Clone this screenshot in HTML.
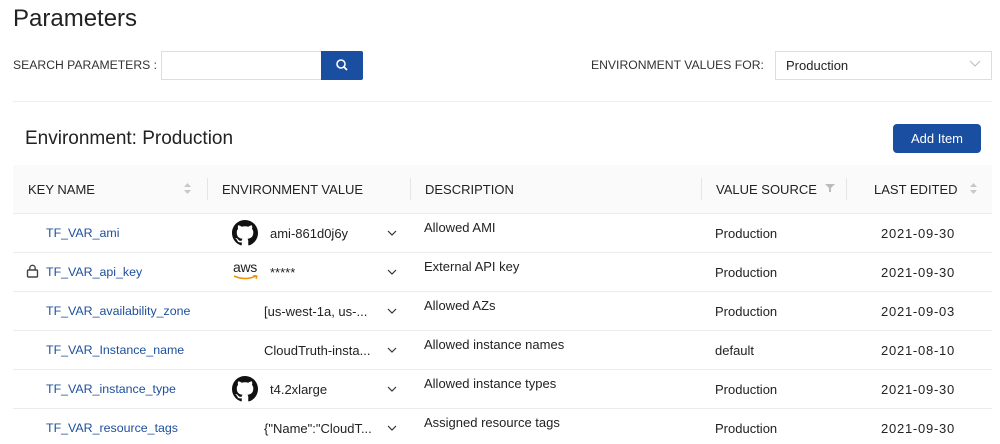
<!DOCTYPE html>
<html><head><style>
*{box-sizing:border-box;margin:0;padding:0}
body{width:1000px;height:444px;overflow:hidden;background:#fff;font-family:"Liberation Sans",sans-serif;color:#222;position:relative}
.a{position:absolute;white-space:nowrap}
.lbl{font-size:12.2px;color:#333}
.th{font-size:13px;color:#222;top:182px}
.sep{position:absolute;top:178px;width:1px;height:22px;background:#e5e5e5}
.row{position:absolute;left:13px;width:979px;height:39px;border-bottom:1px solid #ececec}
.k{font-size:12.4px;color:#1d4f9c;left:46px}
.v{font-size:13px;color:#222;left:264px}
.d{font-size:13px;color:#222;left:424px}
.s{font-size:13px;color:#222;left:715px}
.e{font-size:13px;color:#222;left:881px;letter-spacing:0.75px}
</style></head><body>
<div class="a" style="left:13px;top:5px;font-size:24px;color:#222">Parameters</div>
<div class="a lbl" style="left:13px;top:58px">SEARCH PARAMETERS :</div>
<div class="a" style="left:161px;top:51px;width:161px;height:29px;border:1px solid #ddd;border-right:none"></div>
<div class="a" style="left:321px;top:51px;width:42px;height:29px;background:#1a4ea0;border-radius:0 2px 2px 0">
<svg width="42" height="29"><circle cx="20" cy="13" r="4" stroke="#fff" stroke-width="1.6" fill="none"/><line x1="23" y1="16" x2="26" y2="19" stroke="#fff" stroke-width="1.8"/></svg></div>
<div class="a lbl" style="left:591px;top:58px">ENVIRONMENT VALUES FOR:</div>
<div class="a" style="left:775px;top:51px;width:217px;height:29px;border:1px solid #ddd"></div>
<div class="a" style="left:786px;top:58px;font-size:13px">Production</div>
<svg class="a" style="left:969px;top:60px" width="12" height="8"><path d="M1 1 L6 6 L11 1" stroke="#bbb" fill="none"/></svg>
<div class="a" style="left:13px;top:101px;width:979px;height:1px;background:#eee"></div>
<div class="a" style="left:25px;top:128px;font-size:19px;color:#222">Environment: Production</div>
<div class="a" style="left:893px;top:124px;width:88px;height:29px;background:#1a4ea0;border-radius:4px;color:#fff;font-size:13px;text-align:center;line-height:29px">Add Item</div>
<div class="a" style="left:13px;top:165px;width:979px;height:49px;background:#fafafa;border-bottom:1px solid #ececec"></div>
<div class="a th" style="left:28px">KEY NAME</div>
<svg class="a" style="left:184px;top:183px" width="7" height="11"><path d="M0 4L3.5 0L7 4Z M0 7L3.5 11L7 7Z" fill="#c8c8c8"/></svg>
<div class="sep" style="left:207px"></div>
<div class="a th" style="left:222px">ENVIRONMENT VALUE</div>
<div class="sep" style="left:410px"></div>
<div class="a th" style="left:425px">DESCRIPTION</div>
<div class="sep" style="left:701px"></div>
<div class="a th" style="left:716px">VALUE SOURCE</div>
<svg class="a" style="left:825px;top:184px" width="10" height="8"><path d="M0 0H10L6 4V8H4V4Z" fill="#bbb"/></svg>
<div class="sep" style="left:846px"></div>
<div class="a th" style="left:874px">LAST EDITED</div>
<svg class="a" style="left:970px;top:183px" width="7" height="11"><path d="M0 4L3.5 0L7 4Z M0 7L3.5 11L7 7Z" fill="#c8c8c8"/></svg>

<div class="row" style="top:214px"></div>
<div class="row" style="top:253px"></div>
<div class="row" style="top:292px"></div>
<div class="row" style="top:331px"></div>
<div class="row" style="top:370px"></div>

<svg class="a" style="left:232px;top:220px" width="26" height="26" viewBox="0 0 16 16"><path fill="#111" d="M8 0C3.58 0 0 3.58 0 8c0 3.54 2.290 6.53 5.47 7.59.4.07.55-.17.55-.38 0-.19-.01-.82-.01-1.49-2.01.37-2.53-.49-2.69-.94-.09-.23-.48-.94-.82-1.13-.28-.15-.68-.52-.01-.53.63-.01 1.080.58 1.23.82.72 1.21 1.87.87 2.33.66.07-.52.28-.87.51-1.07-1.78-.2-3.64-.89-3.64-3.95 0-.87.31-1.59.82-2.15-.08-.2-.36-1.02.08-2.12 0 0 .67-.21 2.2.82.64-.18 1.32-.27 2-.27.68 0 1.36.09 2 .27 1.53-1.04 2.2-.82 2.2-.82.44 1.1.16 1.92.08 2.12.51.56.82 1.27.82 2.15 0 3.07-1.87 3.75-3.65 3.95.29.25.54.73.54 1.48 0 1.07-.01 1.93-.01 2.2 0 .21.15.46.55.38A8.013 8.013 0 0016 8c0-4.42-3.58-8-8-8z"/></svg>
<svg class="a" style="left:232px;top:376px" width="26" height="26" viewBox="0 0 16 16"><path fill="#111" d="M8 0C3.58 0 0 3.58 0 8c0 3.54 2.29 6.53 5.47 7.59.4.07.55-.17.55-.38 0-.19-.01-.82-.01-1.49-2.01.37-2.53-.49-2.69-.94-.09-.23-.48-.94-.82-1.13-.28-.15-.68-.52-.01-.53.63-.01 1.08.58 1.23.82.72 1.21 1.87.87 2.33.66.07-.52.28-.87.51-1.07-1.78-.2-3.64-.89-3.64-3.95 0-.87.31-1.59.82-2.15-.08-.2-.36-1.02.08-2.12 0 0 .67-.21 2.2.82.64-.18 1.32-.27 2-.27.68 0 1.36.09 2 .27 1.53-1.04 2.2-.82 2.2-.82.44 1.1.16 1.92.08 2.12.51.56.82 1.27.82 2.15 0 3.07-1.87 3.75-3.65 3.95.29.25.54.73.54 1.48 0 1.07-.01 1.93-.01 2.2 0 .21.15.46.55.38A8.013 8.013 0 0016 8c0-4.42-3.58-8-8-8z"/></svg>
<div class="a" style="left:233px;top:259px;font-size:14px;color:#222;letter-spacing:-0.3px">aws</div>
<svg class="a" style="left:233px;top:275px" width="26" height="6"><path d="M1 1 Q12 6 23 1" stroke="#f29100" stroke-width="1.6" fill="none"/><path d="M20 0L24 1L23 4" stroke="#f29100" stroke-width="1.2" fill="none"/></svg>
<svg class="a" style="left:26px;top:264px" width="14" height="14"><rect x="1.5" y="6" width="10" height="7" rx="1" stroke="#444" stroke-width="1.4" fill="none"/><path d="M3.8 6V4a2.7 2.7 0 015.4 0V6" stroke="#444" stroke-width="1.4" fill="none"/></svg>

<div class="a k" style="top:226px">TF_VAR_ami</div>
<div class="a v" style="left:270px;top:226px">ami-861d0j6y</div>
<div class="a d" style="top:220px">Allowed AMI</div>
<div class="a s" style="top:226px">Production</div>
<div class="a e" style="top:226px">2021-09-30</div>

<div class="a k" style="top:265px">TF_VAR_api_key</div>
<div class="a v" style="left:270px;top:265px">*****</div>
<div class="a d" style="top:259px">External API key</div>
<div class="a s" style="top:265px">Production</div>
<div class="a e" style="top:265px">2021-09-30</div>

<div class="a k" style="top:304px">TF_VAR_availability_zone</div>
<div class="a v" style="top:304px">[us-west-1a, us-...</div>
<div class="a d" style="top:298px">Allowed AZs</div>
<div class="a s" style="top:304px">Production</div>
<div class="a e" style="top:304px">2021-09-03</div>

<div class="a k" style="top:343px">TF_VAR_Instance_name</div>
<div class="a v" style="top:343px">CloudTruth-insta...</div>
<div class="a d" style="top:337px">Allowed instance names</div>
<div class="a s" style="top:343px">default</div>
<div class="a e" style="top:343px">2021-08-10</div>

<div class="a k" style="top:382px">TF_VAR_instance_type</div>
<div class="a v" style="left:270px;top:382px">t4.2xlarge</div>
<div class="a d" style="top:376px">Allowed instance types</div>
<div class="a s" style="top:382px">Production</div>
<div class="a e" style="top:382px">2021-09-30</div>

<div class="a k" style="top:421px">TF_VAR_resource_tags</div>
<div class="a v" style="top:421px">{"Name":"CloudT...</div>
<div class="a d" style="top:415px">Assigned resource tags</div>
<div class="a s" style="top:421px">Production</div>
<div class="a e" style="top:421px">2021-09-30</div>

<svg class="a" style="left:387px;top:230px" width="10" height="7"><path d="M1 1L5 5L9 1" stroke="#333" stroke-width="1.2" fill="none"/></svg>
<svg class="a" style="left:387px;top:269px" width="10" height="7"><path d="M1 1L5 5L9 1" stroke="#333" stroke-width="1.2" fill="none"/></svg>
<svg class="a" style="left:387px;top:308px" width="10" height="7"><path d="M1 1L5 5L9 1" stroke="#333" stroke-width="1.2" fill="none"/></svg>
<svg class="a" style="left:387px;top:347px" width="10" height="7"><path d="M1 1L5 5L9 1" stroke="#333" stroke-width="1.2" fill="none"/></svg>
<svg class="a" style="left:387px;top:386px" width="10" height="7"><path d="M1 1L5 5L9 1" stroke="#333" stroke-width="1.2" fill="none"/></svg>
<svg class="a" style="left:387px;top:425px" width="10" height="7"><path d="M1 1L5 5L9 1" stroke="#333" stroke-width="1.2" fill="none"/></svg>
</body></html>
